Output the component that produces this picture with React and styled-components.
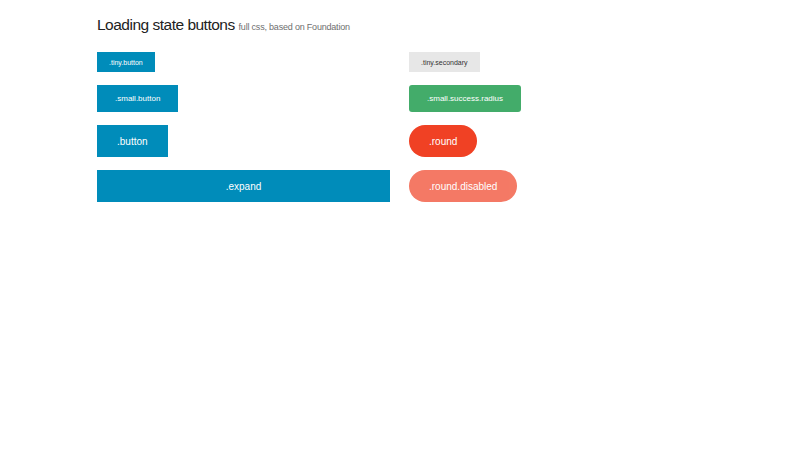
import { styled, createGlobalStyle, css } from "styled-components";

const GlobalStyle = createGlobalStyle`
  html, body {
    margin: 0;
    padding: 0;
    background: #fff;
  }
  body {
    font-family: "Liberation Sans", Arial, sans-serif;
    color: #222;
  }
`;

const Page = styled.div`
  padding: 13px 0 0 97px;
`;

const Title = styled.h1`
  margin: 0 0 13px;
  font-size: 15.5px;
  font-weight: 400;
  letter-spacing: -0.5px;
  line-height: 24px;
  color: #222;

  small {
    font-size: 9px;
    letter-spacing: -0.2px;
    color: #6f6f6f;
  }
`;

const Columns = styled.div`
  display: grid;
  grid-template-columns: 293px 293px;
  column-gap: 19px;
  align-items: start;
`;

const Column = styled.div`
  display: flex;
  flex-direction: column;
  align-items: flex-start;
`;

const sizes = {
  tiny: css`
    height: 20px;
    padding: 0 12px;
    font-size: 7px;
  `,
  small: css`
    height: 27px;
    padding: 0 18px;
    font-size: 8px;
  `,
  normal: css`
    height: 32px;
    padding: 0 20px;
    font-size: 10px;
  `,
};

const palette = {
  primary: { bg: "#008cba", fg: "#fff" },
  secondary: { bg: "#e7e7e7", fg: "#333" },
  success: { bg: "#43ac6a", fg: "#fff" },
  alert: { bg: "#f04124", fg: "#fff" },
};

const Button = styled.button`
  display: inline-flex;
  align-items: center;
  justify-content: center;
  box-sizing: border-box;
  margin: 0 0 13px;
  border: 0;
  font-family: inherit;
  cursor: pointer;
  background: ${(p) => palette[p.$tone || "primary"].bg};
  color: ${(p) => palette[p.$tone || "primary"].fg};
  ${(p) => sizes[p.$size || "normal"]}
  ${(p) => p.$expand && css`width: 100%;`}
  ${(p) => p.$radius && css`border-radius: 3px;`}
  ${(p) => p.$round && css`border-radius: 1000px;`}
  ${(p) => p.disabled && css`opacity: 0.7; cursor: default;`}
`;

export default function App() {
  return (
    <>
      <GlobalStyle />
      <Page>
        <Title>
          Loading state buttons <small>full css, based on Foundation</small>
        </Title>
        <Columns>
          <Column>
            <Button $size="tiny">.tiny.button</Button>
            <Button $size="small">.small.button</Button>
            <Button>.button</Button>
            <Button $expand>.expand</Button>
          </Column>
          <Column>
            <Button $size="tiny" $tone="secondary">.tiny.secondary</Button>
            <Button $size="small" $tone="success" $radius>.small.success.radius</Button>
            <Button $tone="alert" $round>.round</Button>
            <Button $tone="alert" $round disabled>.round.disabled</Button>
          </Column>
        </Columns>
      </Page>
    </>
  );
}
